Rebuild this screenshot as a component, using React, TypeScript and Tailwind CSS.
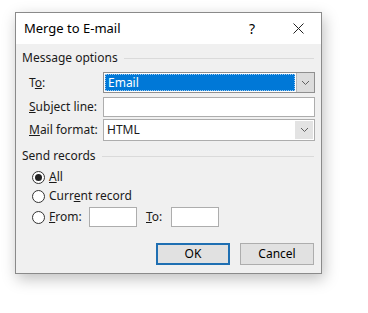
import * as React from "react";

function Chevron() {
  return (
    <svg width="9" height="6" viewBox="0 0 9 6" fill="none">
      <path d="M1 1l3.5 3.5L8 1" stroke="#606060" strokeWidth="1" />
    </svg>
  );
}

function Radio({ checked }: { checked?: boolean }) {
  return (
    <div className="w-[13px] h-[13px] rounded-full border border-[#333333] bg-white flex items-center justify-center">
      {checked && <div className="w-[7px] h-[7px] rounded-full bg-[#222222]" />}
    </div>
  );
}

function GroupHeader({ label }: { label: string }) {
  return (
    <div className="flex items-center h-[16px] pl-[6px] pr-[7px]">
      <span className="whitespace-nowrap">{label}</span>
      <div className="flex-1 h-px bg-[#dadada] ml-[6px]" />
    </div>
  );
}

export default function App() {
  return (
    <div
      className="w-[368px] h-[313px] bg-white pt-[12px] pl-[15px] text-[12px] text-[#1a1a1a]"
      style={{ fontFamily: '"Noto Sans", "Open Sans", sans-serif' }}
    >
      <div className="w-[307px] h-[262px] border border-[#8a8a8a] bg-[#f0f0f0] shadow-[2px_5px_14px_rgba(0,0,0,0.25)] flex flex-col">
        {/* title bar */}
        <div className="h-[31px] bg-white flex items-center pl-[8px] shrink-0">
          <span className="text-[13px] text-black flex-1">Merge to E-mail</span>
          <span className="text-[14px] text-black w-[14px] text-center mr-[34px]">?</span>
          <svg width="11" height="11" viewBox="0 0 11 11" className="mr-[17px]">
            <path d="M0.5 0.5l10 10M10.5 0.5l-10 10" stroke="#222" strokeWidth="1" />
          </svg>
        </div>

        {/* message options */}
        <div className="mt-[6px]">
          <GroupHeader label="Message options" />
        </div>

        <div className="flex items-center mt-[6px] h-[21px]">
          <span className="w-[87px] pl-[13px]">
            T<u>o</u>:
          </span>
          <div className="w-[212px] h-[21px] border border-[#8f8f8f] bg-white flex items-stretch">
            <div className="flex-1 m-[1px] bg-[#0078d7] border border-dotted border-[#9cc8f0] text-white flex items-center pl-[2px]">
              Email
            </div>
            <div className="w-[18px] bg-[#dcdcdc] border-l border-[#b8b8b8] flex items-center justify-center">
              <Chevron />
            </div>
          </div>
        </div>

        <div className="flex items-center mt-[3px] h-[21px]">
          <span className="w-[87px] pl-[13px]">
            <u>S</u>ubject line:
          </span>
          <div className="w-[212px] h-[20px] border border-[#adadad] bg-white" />
        </div>

        <div className="flex items-center mt-[2px] h-[22px]">
          <span className="w-[87px] pl-[13px]">
            <u>M</u>ail format:
          </span>
          <div className="w-[212px] h-[22px] border border-[#adadad] bg-white flex items-stretch">
            <div className="flex-1 flex items-center pl-[3px]">HTML</div>
            <div className="w-[18px] my-[1px] mr-[1px] bg-[#e3e3e3] flex items-center justify-center">
              <Chevron />
            </div>
          </div>
        </div>

        {/* send records */}
        <div className="mt-[7px]">
          <GroupHeader label="Send records" />
        </div>

        <div className="flex items-center h-[16px] mt-[5px] pl-[16px]">
          <Radio checked />
          <span className="ml-[4px]">
            <u>A</u>ll
          </span>
        </div>
        <div className="flex items-center h-[16px] mt-[3px] pl-[16px]">
          <Radio />
          <span className="ml-[4px]">
            Curr<u>e</u>nt record
          </span>
        </div>
        <div className="flex items-center h-[20px] mt-[3px] pl-[16px]">
          <Radio />
          <span className="ml-[4px] w-[40px]">
            <u>F</u>rom:
          </span>
          <div className="w-[48px] h-[20px] border border-[#adadad] bg-white" />
          <span className="ml-[9px] w-[25px]">
            <u>T</u>o:
          </span>
          <div className="w-[48px] h-[20px] border border-[#adadad] bg-white" />
        </div>

        {/* buttons */}
        <div className="flex justify-end gap-[10px] mt-[16px] pr-[7px]">
          <button className="w-[74px] h-[22px] border-2 border-[#1f6fb2] bg-[#e1e1e1] text-[12px] text-black">
            OK
          </button>
          <button className="w-[74px] h-[22px] border border-[#adadad] bg-[#e1e1e1] text-[12px] text-black">
            Cancel
          </button>
        </div>
      </div>
    </div>
  );
}
